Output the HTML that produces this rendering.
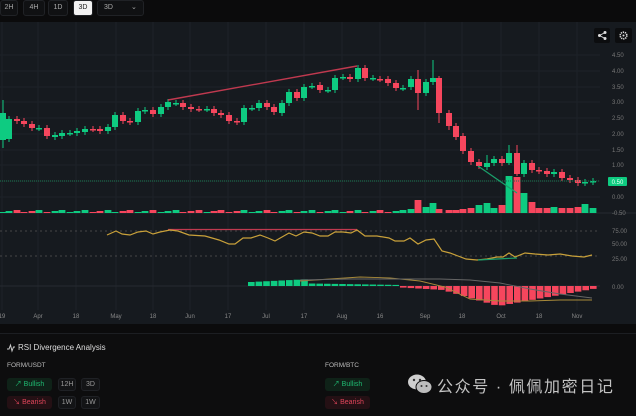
<!DOCTYPE html>
<html><head><meta charset="utf-8"><style>
*{margin:0;padding:0;box-sizing:border-box}
body{width:636px;height:416px;background:#0b0b0c;font-family:"Liberation Sans","Noto Sans CJK SC",sans-serif;overflow:hidden;position:relative}
.top{position:absolute;left:0;top:0;width:636px;height:22px;background:#0b0b0c}
.tb{position:absolute;top:0;height:16px;border:1px solid #202226;border-radius:3px;background:#101113;color:#aaa;font-size:7px;line-height:14px;text-align:center}
.tb.on{background:#f2f2f2;color:#222}
.chart{position:absolute;left:0;top:22px;width:636px;height:302px;background:#161a1f}
.panel{position:absolute;left:0;top:333px;width:636px;height:83px;background:#0d0d0e;border-top:1px solid #1c1e22}
.t{position:absolute;font-size:7px;color:#ccc;white-space:nowrap}
.btn{position:absolute;height:13px;border-radius:3px;font-size:7px;line-height:13px;text-align:center}
.bu{background:#0f2218;color:#1fb870}
.be{background:#241014;color:#e0455a}
.sm{background:#131416;border:1px solid #1f2125;color:#999;line-height:11px}
</style></head><body>
<div class="top">
<div class="tb" style="left:0;width:18px">2H</div>
<div class="tb" style="left:23px;width:22px">4H</div>
<div class="tb" style="left:48px;width:20px">1D</div>
<div class="tb on" style="left:73px;width:20px">3D</div>
<div class="tb" style="left:97px;width:47px;text-align:left;padding-left:6px">3D<span style="position:absolute;left:33px;top:0">⌄</span></div>
</div>
<div class="chart"></div>
<svg id="s" width="636" height="416" style="position:absolute;left:0;top:0" xmlns="http://www.w3.org/2000/svg"></svg>
<div class="panel">
<svg width="10" height="10" style="position:absolute;left:6px;top:9px"><path d="M1 6 L3 6 L4.5 2 L6 8 L7.5 4 L9 4" stroke="#ccc" fill="none" stroke-width="1"/></svg>
<div class="t" style="left:18px;top:9px;font-size:8px;color:#ddd">RSI Divergence Analysis</div>
<div class="t" style="left:7px;top:28px;font-size:6.5px;color:#bbb">FORM/USDT</div>
<div class="t" style="left:325px;top:28px;font-size:6.5px;color:#bbb">FORM/BTC</div>
<div class="btn bu" style="left:7px;top:44px;width:45px">↗ Bullish</div>
<div class="btn be" style="left:7px;top:62px;width:45px">↘ Bearish</div>
<div class="btn sm" style="left:58px;top:44px;width:18px">12H</div>
<div class="btn sm" style="left:81px;top:44px;width:19px">3D</div>
<div class="btn sm" style="left:58px;top:62px;width:18px">1W</div>
<div class="btn sm" style="left:81px;top:62px;width:19px">1W</div>
<div class="btn bu" style="left:325px;top:44px;width:45px">↗ Bullish</div>
<div class="btn be" style="left:325px;top:62px;width:45px">↘ Bearish</div>
<svg width="26" height="22" style="position:absolute;left:407px;top:39px"><ellipse cx="10" cy="9" rx="9" ry="7.5" fill="#cfcfcf"/><ellipse cx="17" cy="14" rx="8" ry="6.5" fill="#bdbdbd" stroke="#0d0d0e" stroke-width="1"/><circle cx="7" cy="7" r="1.2" fill="#333"/><circle cx="13" cy="7" r="1.2" fill="#333"/><circle cx="14.5" cy="13" r="1" fill="#333"/><circle cx="19.5" cy="13" r="1" fill="#333"/></svg>
<div class="t" style="left:437px;top:39px;font-size:16px;color:#c4c4c4;letter-spacing:1.6px">公众号 · 佩佩加密日记</div>
</div>
<script>
var s=document.getElementById('s'),h='';
function L(x1,y1,x2,y2,c,w,d){h+='<line x1="'+x1+'" y1="'+y1+'" x2="'+x2+'" y2="'+y2+'" stroke="'+c+'" stroke-width="'+(w||1)+'"'+(d?' stroke-dasharray="'+d+'"':'')+'/>';}
function R(x,y,w,hh,c){h+='<rect x="'+x+'" y="'+y+'" width="'+w+'" height="'+Math.max(hh,1)+'" fill="'+c+'"/>';}
function T(x,y,t,c,sz,a){h+='<text x="'+x+'" y="'+y+'" fill="'+(c||'#777')+'" font-size="'+(sz||6)+'" font-family="Liberation Sans" text-anchor="'+(a||'start')+'">'+t+'</text>';}
var G='#0ecb81',Rd='#f6465d';
var xs=[2,38,76,116,153,190,228,266,304,342,380,425,462,501,539,577];
xs.forEach(function(x){L(x,22,x,310,'#1d2228')});
[55,71,87,102,118,134,150,165,181,197].forEach(function(y){L(0,y,600,y,'#1d2228')});
L(0,213,636,213,'#262a30');
var C=[[3,140,113],[9,139,119],[17,119,121],[24,121,124],[32,124,128],[39,128,128],[47,128,136],[55,137,135],[62,136,133],[70,133,133],[77,133,131],[85,132,129],[93,129,129],[100,129,131],[108,131,127],[115,127,115],[123,115,121],[130,121,122],[138,122,111],[145,111,110],[153,110,114],[161,114,107],[168,107,102],[176,103,103],[183,103,107],[191,107,109],[199,109,109],[207,109,109],[214,109,113],[221,113,115],[229,115,121],[237,121,122],[244,122,108],[252,108,108],[259,108,103],[267,103,107],[274,107,112],[282,113,103],[289,103,92],[297,92,98],[304,98,87],[312,86,86],[320,85,90],[328,90,90],[335,90,78],[343,77,77],[350,77,79],[358,79,68],[365,68,78],[373,78,78],[380,79,79],[388,79,83],[396,83,88],[403,88,88],[411,87,79],[418,79,93],[426,93,82],[433,82,78],[439,78,113],[449,113,126],[456,126,137],[463,136,151],[471,151,162],[479,162,166],[487,167,163],[494,163,159],[502,159,163],[509,163,153],[517,153,174],[524,174,163],[532,163,170],[539,170,171],[547,171,174],[554,174,172],[562,172,178],[570,178,180],[578,180,183],[585,183,182],[593,182,181]];
var wick={3:[100,148],418:[70,110],433:[60,85],439:[76,123],517:[145,176],509:[145,165],487:[155,170],449:[110,130]};
var V={487:[G,10],494:[G,5],502:[Rd,8],509:[G,37],517:[Rd,36],524:[G,20],532:[Rd,11],539:[Rd,5],547:[Rd,5],554:[G,6],562:[Rd,5],570:[Rd,5],578:[Rd,6],585:[G,9],593:[G,5],471:[Rd,5],479:[G,8],463:[Rd,4],456:[Rd,3],449:[Rd,3],439:[Rd,4],433:[G,10],426:[G,6],418:[Rd,13],411:[G,4],396:[G,2]};
C.forEach(function(c,i){var x=c[0],o=c[1],cl=c[2],col=cl<o?G:(cl>o?Rd:(i%2?G:Rd));
var t=Math.min(o,cl),b=Math.max(o,cl);var w=wick[x]||[t-3,b+3];
L(x,w[0],x,w[1],col,1);R(x-3,t,6,Math.max(b-t,1.5),col);
var v=V[x]||[col,1+(i*7%3)];R(x-3.4,213-v[1],6.8,v[1],v[0]);});
L(0,181,600,181,'#1b7a52',1,'1 1');
L(168,100,357,66,'#c0394f',1.4);L(478,166,517,193,'#1aa06b',1.2);
[['4.50',55],['4.00',71],['3.50',87],['3.00',102],['2.50',118],['2.00',134],['1.50',150],['1.00',165],['0.00',197],['-0.50',213]].forEach(function(p){T(612,p[1]+2,p[0],'#777',6)});
h+='<rect x="608" y="177" width="19" height="9" rx="1" fill="#0ecb81"/>';T(617.5,184,'0.50','#eafff3',6,'middle');
L(0,231,600,231,'#555',0.8,'2 3');L(0,256,600,256,'#555',0.8,'2 3');
L(168,229.5,357,229.5,'#c0394f',1.2);
var rp=[[107,235],[116,231],[122,234],[130,235],[138,232],[146,231],[153,234],[160,232],[170,230],[178,231],[189,235],[205,236],[219,240],[229,244],[235,244],[243,238],[251,238],[260,235],[268,238],[275,241],[282,237],[289,233],[296,236],[304,232],[312,233],[320,236],[328,236],[335,232],[343,232],[351,233],[357,230],[365,236],[377,236],[389,238],[395,241],[404,241],[410,238],[418,244],[426,240],[434,239],[442,251],[450,253],[458,256],[466,259],[477,260],[487,259],[497,257],[503,257],[509,253],[515,257],[525,253],[535,254],[548,255],[560,254],[572,256],[584,257],[592,255]];
h+='<polyline points="'+rp.join(' ')+'" fill="none" stroke="#c9a13a" stroke-width="1.2"/>';
L(478,260,517,258,'#1aa06b',1.2);
[['75.00',231],['50.00',244],['25.00',259],['0.00',287]].forEach(function(p){T(612,p[1]+2,p[0],'#777',6)});
L(0,286,600,286,'#262a30');
for(var x=248;x<=595;x+=7.6){var t;if(x<308){t=286-(4+(x-248)/60*3);R(x,t,6.6,286-t,G);}else if(x<398){t=286-(2.5-(x-308)/90*1.5);R(x,t,6.6,286-t,G);}else{var d;if(x<440)d=1.5+(x-398)/42*2.5;else if(x<495)d=4+(x-440)/55*16;else d=20-(x-495)/100*18;R(x,286,6.6,d,Rd);}}
h+='<polyline points="300,281 330,279 360,277 390,278 420,281 445,287 470,299 500,301 530,301 560,300 592,300" fill="none" stroke="#a88a3a" stroke-width="0.9"/>';
h+='<polyline points="300,280 350,279 400,279 440,279 470,280 500,283 530,289 560,294 592,298" fill="none" stroke="#666" stroke-width="0.9"/>';
[['19',2],['Apr',38],['18',76],['May',116],['18',153],['Jun',190],['17',228],['Jul',266],['17',304],['Aug',342],['16',380],['Sep',425],['18',462],['Oct',501],['18',539],['Nov',577]].forEach(function(p){T(p[1],318,p[0],'#888',6,'middle')});
h+='<rect x="594" y="28" width="16" height="15" rx="2" fill="#0c0d0f"/><rect x="615" y="28" width="17" height="15" rx="2" fill="#0c0d0f"/>';
h+='<circle cx="605" cy="32.5" r="1.5" fill="#ddd"/><circle cx="605" cy="38.5" r="1.5" fill="#ddd"/><circle cx="599.5" cy="35.5" r="1.5" fill="#ddd"/>';L(599.5,35.5,605,32.5,'#ddd',0.9);L(599.5,35.5,605,38.5,'#ddd',0.9);
h+='<circle cx="623.5" cy="35.5" r="3.3" fill="none" stroke="#ddd" stroke-width="1.6" stroke-dasharray="1.3 0.8"/><circle cx="623.5" cy="35.5" r="1" fill="#ddd"/>';
s.innerHTML=h;
</script>
</body></html>
